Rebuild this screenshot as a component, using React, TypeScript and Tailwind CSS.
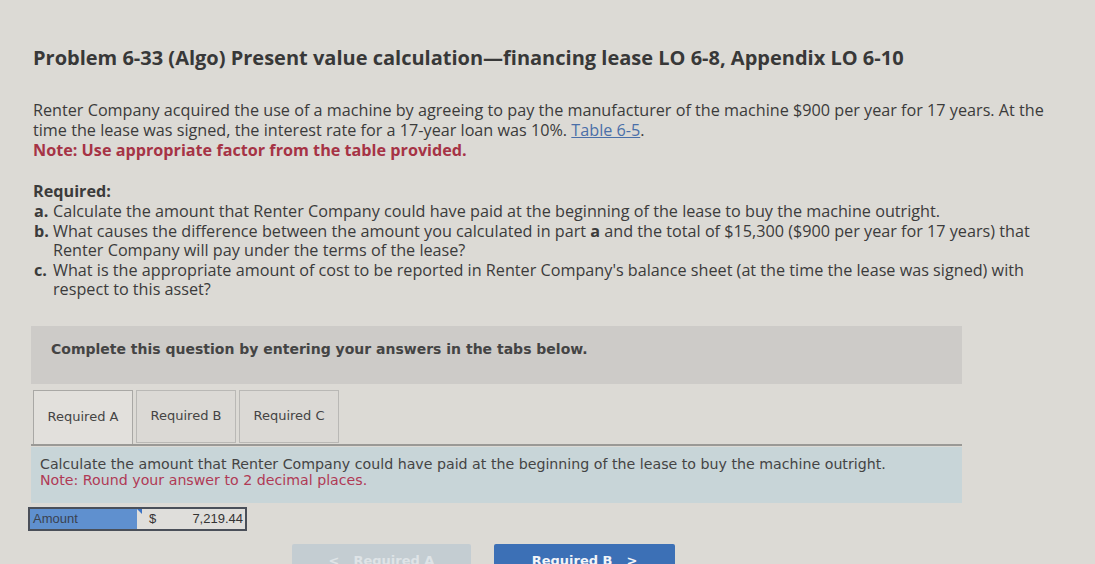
import React from 'react';

const sans = { fontFamily: '"Open Sans", Lato, sans-serif' };
const verd = { fontFamily: '"DejaVu Sans", Verdana, sans-serif' };

const items = [
    {
        k: 'a.',
        t: <>Calculate the amount that Renter Company could have paid at the beginning of the lease to buy the machine outright.</>,
    },
    {
        k: 'b.',
        t: (
            <>
                What causes the difference between the amount you calculated in part <b>a</b> and the total of $15,300 ($900 per year for 17 years) that
                <br />
                Renter Company will pay under the terms of the lease?
            </>
        ),
    },
    {
        k: 'c.',
        t: (
            <>
                What is the appropriate amount of cost to be reported in Renter Company's balance sheet (at the time the lease was signed) with
                <br />
                respect to this asset?
            </>
        ),
    },
];

export default function App() {
    return (
        <div className="h-[564px] w-[1095px] overflow-hidden bg-[#dcdad5] text-[#3b3b3b]" style={sans}>
            <div className="pl-[33px] pr-[20px] pt-[45px]">
                <h1 className="whitespace-nowrap text-[20px] font-bold leading-[26px] text-[#383838]">
                    Problem 6-33 (Algo) Present value calculation—financing lease LO 6-8, Appendix LO 6-10
                </h1>

                <div className="mt-[30px] whitespace-nowrap text-[16.2px] leading-[19.5px]">
                    <p>
                        Renter Company acquired the use of a machine by agreeing to pay the manufacturer of the machine $900 per year for 17 years. At the
                        <br />
                        time the lease was signed, the interest rate for a 17-year loan was 10%.{' '}
                        <span className="text-[#4a6fa8] underline">Table 6-5</span>.
                    </p>
                    <p className="mt-[1px] font-bold text-[#a63345]">Note: Use appropriate factor from the table provided.</p>
                </div>

                <div className="mt-[21px] whitespace-nowrap text-[16.2px] leading-[19.5px]">
                    <p className="font-bold">Required:</p>
                    <ol className="mt-[1px]">
                        {items.map((it) => (
                            <li key={it.k} className="flex pl-[1px]">
                                <span className="w-[19px] shrink-0 font-bold">{it.k}</span>
                                <span>{it.t}</span>
                            </li>
                        ))}
                    </ol>
                </div>
            </div>

            <div className="ml-[31px] mt-[26px] w-[931px]" style={verd}>
                <div className="h-[58px] bg-[#cdcbc8] pl-[20px] pt-[13px] text-[14px] font-bold text-[#444]">
                    Complete this question by entering your answers in the tabs below.
                </div>

                <div className="mt-[6px] flex gap-[3px] pl-[2px]">
                    {['Required A', 'Required B', 'Required C'].map((t, i) => (
                        <div
                            key={t}
                            className={
                                i === 0
                                    ? 'flex h-[54px] w-[100px] items-center justify-center border border-b-0 border-[#a9a8a5] bg-[#e2e0dc] text-[13px] text-[#444]'
                                    : 'flex h-[53px] w-[100px] items-center justify-center border border-[#b9b8b5] bg-[#dbd9d5] text-[13px] text-[#444]'
                            }
                        >
                            {t}
                        </div>
                    ))}
                </div>
                <div className="h-[2px] bg-[#9a9996]" />

                <div className="mt-[1px] h-[56px] bg-[#c8d5d8] pl-[9px] pt-[9px] text-[14.2px] leading-[16px] text-[#444]">
                    <p>Calculate the amount that Renter Company could have paid at the beginning of the lease to buy the machine outright.</p>
                    <p className="text-[#b03a55]">Note: Round your answer to 2 decimal places.</p>
                </div>
            </div>

            <div className="ml-[28px] mt-[4px] flex h-[24px] w-[219px] border-2 border-[#4a4f59] text-[13px]" style={{ fontFamily: '"Liberation Sans", Arial, sans-serif' }}>
                <div className="flex w-[107px] items-center bg-[#5f90cf] pl-[3px] text-[#3a4250]">Amount</div>
                <div className="relative flex flex-1 items-center justify-between bg-[#dfdedb] pl-[12px] pr-[2px] text-[#333]">
                    <span className="absolute left-0 top-0 h-0 w-0 border-l-[5px] border-t-[5px] border-l-transparent border-t-[#3c73c4]" />
                    <span>$</span>
                    <span>7,219.44</span>
                </div>
            </div>

            <div className="mt-[13px] flex gap-[23px] pl-[292px]" style={verd}>
                <div className="flex h-[30px] w-[179px] items-start justify-center gap-[14px] rounded-t-[2px] bg-[#c4cdd2] pt-[7px] text-[13px] font-bold text-[#dfe4e7]">
                    <span>&lt;</span>
                    <span>Required A</span>
                </div>
                <div className="flex h-[30px] w-[181px] items-start justify-center gap-[14px] rounded-t-[2px] bg-[#3c70b6] pt-[7px] text-[13px] font-bold text-[#f3f5f8]">
                    <span>Required B</span>
                    <span>&gt;</span>
                </div>
            </div>
        </div>
    );
}
